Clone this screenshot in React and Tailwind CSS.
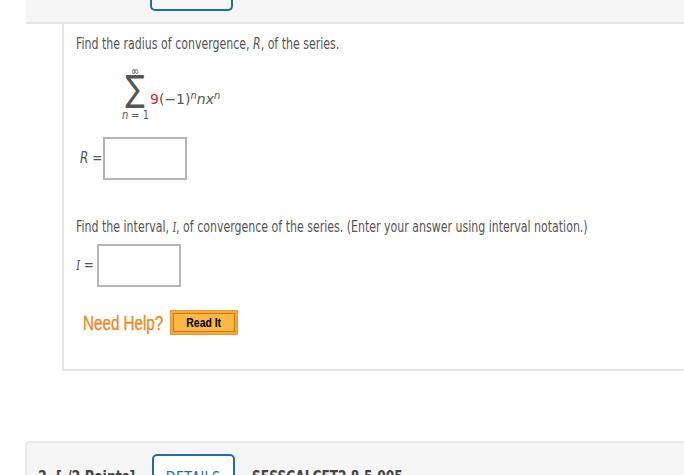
function Sq({ children, className = "" }) {
  return <span className={"inline-block origin-left whitespace-nowrap " + className}>{children}</span>;
}

export default function App() {
  const f = { fontFamily: '"DejaVu Sans", Verdana, sans-serif' };
  const arial = { fontFamily: '"Liberation Sans", Arial, sans-serif' };
  return (
    <div className="w-[684px] h-[475px] overflow-hidden bg-white flex flex-col text-[#555]" style={f}>
      {/* top band */}
      <div className="ml-[26px] h-[24px] shrink-0 bg-[#f5f5f5] border-b-2 border-[#e6e6e6] flex items-start">
        <div className="ml-[124px] w-[83px] h-[11px] border-2 border-t-0 border-[#1f6ea3] rounded-b-[5px] bg-[#f7f7f7]" />
      </div>
      {/* panel */}
      <div className="ml-[62px] h-[347px] shrink-0 border-l-2 border-b-2 border-[#e6e6e6] pl-[12px] pt-[11px] flex flex-col">
        <div className="text-[15px] leading-[18px] h-[18px]">
          <Sq className="scale-x-[0.733]">Find the radius of convergence, <i>R</i>, of the series.</Sq>
        </div>
        <div className="ml-[44px] mt-[13px] flex items-start h-[56px]">
          <div className="flex flex-col items-center w-[30px]">
            <div className="h-[10px] flex items-center justify-center">
              <span className="text-[12px] leading-none inline-block scale-x-[0.8]">∞</span>
            </div>
            <div className="h-[28px] flex items-center justify-center">
              <span className="-mt-[2px] text-[36px] leading-none inline-block scale-x-[0.8]">∑</span>
            </div>
            <div className="mt-[4px] h-[14px] flex items-center justify-center">
              <span className="text-[12px] leading-none whitespace-nowrap inline-block scale-x-[0.82]"><i>n</i> = 1</span>
            </div>
          </div>
          <div className="mt-[24px] text-[14px] leading-[18px] whitespace-nowrap">
            <span className="text-[#e8261f]">9</span>(−1)<sup className="text-[10px] leading-none"><i>n</i></sup><i>nx</i><sup className="text-[10px] leading-none"><i>n</i></sup>
          </div>
        </div>
        <div className="mt-[15px] flex items-center">
          <div className="w-[27px] pl-[4px] text-[15px]">
            <Sq className="scale-x-[0.8]"><i>R</i> =</Sq>
          </div>
          <div className="w-[84px] h-[43px] border-2 border-[#b5b5b5] bg-white" />
        </div>
        <div className="mt-[38px] text-[15px] leading-[18px] h-[18px]">
          <Sq className="scale-x-[0.733]">Find the interval, <i className="font-serif">I</i>, of convergence of the series. (Enter your answer using interval notation.)</Sq>
        </div>
        <div className="mt-[8px] flex items-center">
          <div className="w-[21px] text-[15px]">
            <Sq className="scale-x-[0.8]"><i className="font-serif">I</i> =</Sq>
          </div>
          <div className="w-[84px] h-[43px] border-2 border-[#b5b5b5] bg-white" />
        </div>
        <div className="mt-[23px] ml-[7px] flex items-center" style={arial}>
          <div className="w-[87px] text-[20px] leading-[24px] text-[#f08a1c] [-webkit-text-stroke:0.4px_#f08a1c]">
            <Sq className="scale-x-[0.76]">Need Help?</Sq>
          </div>
          <div className="w-[68px] h-[25px] border border-[#eb9a3a] p-[2px] bg-[#f7a63c]">
            <div className="w-full h-full border border-[#d27a12] bg-[#fcb845] flex items-center justify-center text-[13px] font-bold text-black">
              <span className="inline-block scale-x-[0.8] whitespace-nowrap">Read It</span>
            </div>
          </div>
        </div>
      </div>
      {/* bottom band */}
      <div className="mt-[70px] ml-[25px] flex-1 bg-[#f5f5f5] border-t-2 border-l-2 border-[#ebebeb] rounded-tl-[4px] flex items-start">
        <div className="w-[125px] pl-[11px] mt-[23px] text-[15px] font-bold text-[#444]">
          <Sq className="scale-x-[0.84]">2. [-/2 Points]</Sq>
        </div>
        <div className="mt-[11px] w-[83px] h-[30px] border-2 border-[#1f6ea3] rounded-t-[5px] bg-white flex justify-center pt-[11px]">
          <span className="text-[15px] text-[#1f6ea3] inline-block scale-x-[0.85] tracking-wide">DETAILS</span>
        </div>
        <div className="ml-[17px] mt-[23px] text-[15px] font-bold text-[#444]">
          <Sq className="scale-x-[0.815]">SESSCALCET2 8.5.005.</Sq>
        </div>
      </div>
    </div>
  );
}
